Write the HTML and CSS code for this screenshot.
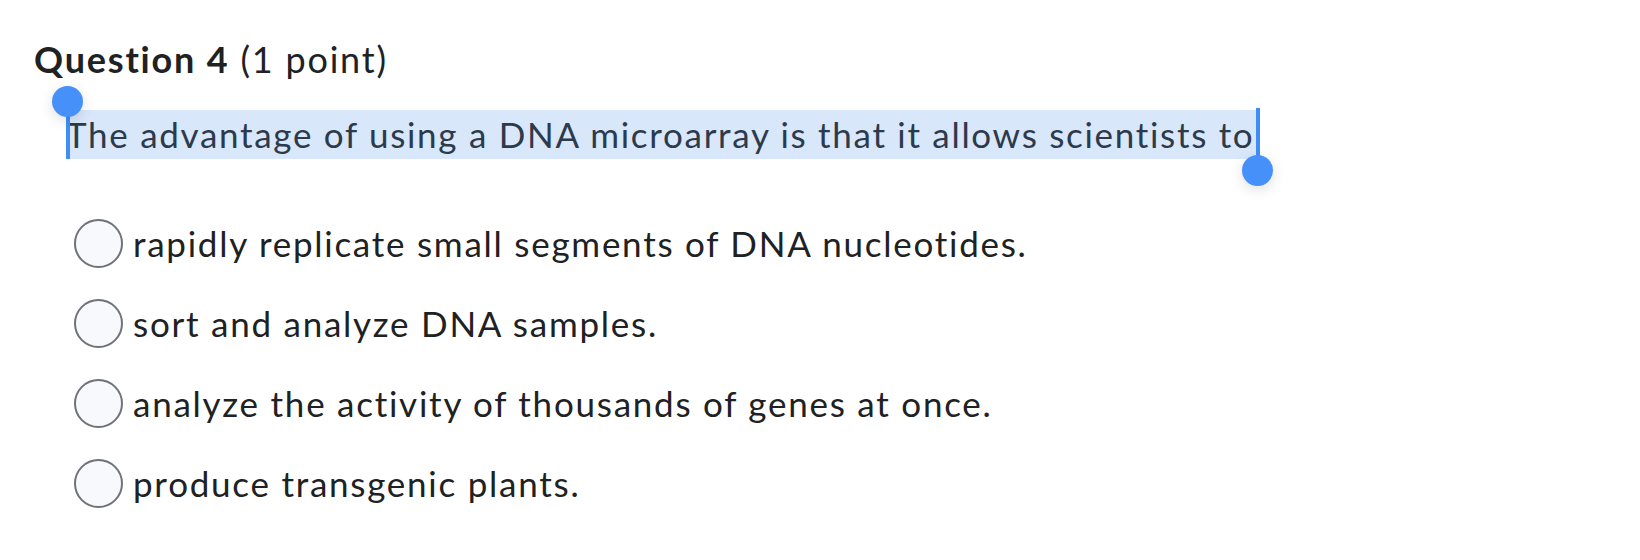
FILE: index.html
```html
<!DOCTYPE html>
<html lang="en">
<head>
    <meta charset="UTF-8">
    <title>Question 4</title>
    <link rel="stylesheet" href="styles.css">
</head>
<body>
    <div class="question">
        <h2 class="question-title"><strong>Question 4</strong> (1 point)</h2>

        <div class="question-text">
            <span class="selected">The advantage of using a DNA microarray is that it allows scientists to<span class="handle handle-start"></span><span class="handle handle-end"></span></span>
        </div>

        <ul class="choices">
            <li class="choice"><span class="radio"></span>rapidly replicate small segments of DNA nucleotides.</li>
            <li class="choice"><span class="radio"></span>sort and analyze DNA samples.</li>
            <li class="choice"><span class="radio"></span>analyze the activity of thousands of genes at once.</li>
            <li class="choice"><span class="radio"></span>produce transgenic plants.</li>
        </ul>
    </div>
</body>
</html>
```

FILE: styles.css
```css
body {
    margin: 0;
    background: #ffffff;
    font-family: Lato, "Open Sans", sans-serif;
    font-variant-ligatures: none;
}
.question {
    padding: 37px 0 0 34px;
}
.question-title {
    margin: 0;
    font-size: 36px;
    font-weight: normal;
    line-height: 44px;
    letter-spacing: 1.8px;
    color: #202122;
}
.question-title strong {
    font-weight: bold;
}
.question-text {
    margin: 29px 0 0 32px;
    font-size: 35px;
    color: #2c3a4b;
    line-height: 49px;
    letter-spacing: 1.7px;
}
.selected {
    position: relative;
    display: inline-block;
    background: #d9e7fb;
    padding-right: 2px;
}
.handle {
    position: absolute;
    width: 4px;
    background: #3f8ef8;
}
.handle::after {
    content: "";
    position: absolute;
    left: -14px;
    width: 31px;
    height: 31px;
    border-radius: 50%;
    background: #4591f9;
    box-shadow: 0 4px 14px rgba(0, 0, 0, 0.12);
}
.handle-start {
    left: 0;
    top: -4px;
    height: 53px;
}
.handle-start::after {
    top: -20px;
}
.handle-end {
    right: -4px;
    top: -2px;
    height: 58px;
}
.handle-end::after {
    bottom: -20px;
}
.choices {
    list-style: none;
    margin: 44px 0 0 40px;
    padding: 0;
}
.choice {
    display: flex;
    align-items: center;
    height: 80px;
    font-size: 35px;
    letter-spacing: 1.75px;
    color: #202122;
}
.radio {
    flex: none;
    width: 45px;
    height: 45px;
    margin-right: 10px;
    border: 2px solid #6e7378;
    border-radius: 50%;
    background: #f8f9fd;
}
```
